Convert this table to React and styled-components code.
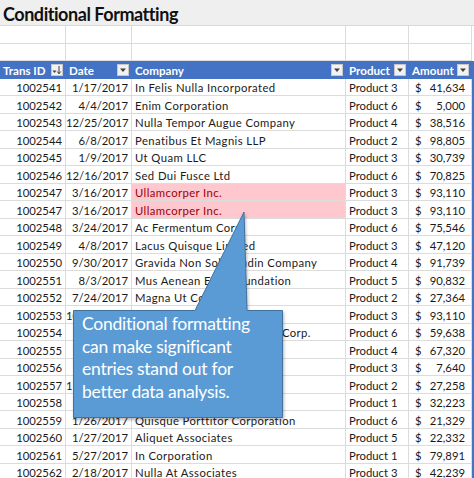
import styled, { createGlobalStyle } from "styled-components";

const GlobalStyle = createGlobalStyle`
  body {
    margin: 0;
    background: #ffffff;
  }
`;

// cells that sit wholly under the callout are left blank, as nothing of them shows
const rows = [
  ["1002541", "1/17/2017", "In Felis Nulla Incorporated", "Product 3", "41,634"],
  ["1002542", "4/4/2017", "Enim Corporation", "Product 6", "5,000"],
  ["1002543", "12/25/2017", "Nulla Tempor Augue Company", "Product 4", "38,516"],
  ["1002544", "6/8/2017", "Penatibus Et Magnis LLP", "Product 2", "98,805"],
  ["1002545", "1/9/2017", "Ut Quam LLC", "Product 3", "30,739"],
  ["1002546", "12/16/2017", "Sed Dui Fusce Ltd", "Product 6", "70,825"],
  ["1002547", "3/16/2017", "Ullamcorper Inc.", "Product 3", "93,110", true],
  ["1002547", "3/16/2017", "Ullamcorper Inc.", "Product 3", "93,110", true],
  ["1002548", "3/24/2017", "Ac Fermentum Corp.", "Product 6", "75,546"],
  ["1002549", "4/8/2017", "Lacus Quisque Limited", "Product 3", "47,120"],
  ["1002550", "9/30/2017", "Gravida Non Sollicitudin Company", "Product 4", "91,739"],
  ["1002551", "8/3/2017", "Mus Aenean Eget Foundation", "Product 5", "90,832"],
  ["1002552", "7/24/2017", "Magna Ut Corp.", "Product 2", "27,364"],
  ["1002553", "10/23/2017", "", "Product 3", "93,110"],
  ["1002554", "", "Vestibulum Ante Primis Est Corp.", "Product 6", "59,638"],
  ["1002555", "", "", "Product 4", "67,320"],
  ["1002556", "", "", "Product 3", "7,640"],
  ["1002557", "11/19/2017", "", "Product 2", "27,258"],
  ["1002558", "", "", "Product 1", "32,223"],
  ["1002559", "1/26/2017", "Quisque Porttitor Corporation", "Product 6", "21,329"],
  ["1002560", "1/27/2017", "Aliquet Associates", "Product 5", "22,332"],
  ["1002561", "5/27/2017", "In Corporation", "Product 1", "79,891"],
  ["1002562", "2/18/2017", "Nulla At Associates", "Product 3", "42,239"],
];

const Sheet = styled.div`
  position: relative;
  width: 474px;
  height: 478px;
  overflow: hidden;
  background: #ffffff;
  font-family: Lato, "Open Sans", sans-serif;
  color: #1a1a1a;
`;

const TitleBar = styled.div`
  height: 26px;
  box-sizing: border-box;
  background: #efefef;
  border-bottom: 1px solid #d9d9d9;
  padding: 3px 0 0 3px;
  font-size: 18px;
  font-weight: 700;
  letter-spacing: -0.45px;
  line-height: 22px;
  color: #111;
`;

const Row = styled.div`
  display: grid;
  grid-template-columns: 66px 66px 214px 63px 63px 2px;
  height: 17.5px;
  background: ${(p) => (p.$header ? "#4472c4" : "#ffffff")};
`;

const Cell = styled.div`
  box-sizing: border-box;
  height: 17.5px;
  overflow: hidden;
  white-space: nowrap;
  border-right: 1px solid #dcdcdc;
  border-bottom: 1px solid #dcdcdc;
  padding: 1.5px ${(p) => p.$pr || 0}px 0 ${(p) => p.$pl || 0}px;
  text-align: ${(p) => p.$align || "left"};
  font-size: 11.3px;
  line-height: 16px;
  letter-spacing: ${(p) => (p.$spread ? "0.4px" : "0")};
  background: ${(p) => (p.$pink ? "#ffc7ce" : "transparent")};
  color: ${(p) => (p.$pink ? "#9c0006" : "inherit")};
`;

const Money = styled(Cell)`
  display: flex;
  justify-content: space-between;
`;

const Edge = styled.div`
  background: ${(p) => (p.$blue ? "#4472c4" : "#ffffff")};
`;

const HeadCell = styled.div`
  box-sizing: border-box;
  height: 17.5px;
  display: flex;
  align-items: center;
  justify-content: space-between;
  padding: 1px 3px 0 3px;
  color: #ffffff;
  font-size: 11.6px;
  font-weight: 700;
  white-space: nowrap;
`;

const FilterButton = styled.span`
  width: 12px;
  height: 12px;
  box-sizing: border-box;
  background: #f2f2f2;
  border: 1px solid #c8c8c8;
  display: flex;
  align-items: center;
  justify-content: center;
`;

const Callout = styled.div`
  position: absolute;
  left: 72px;
  top: 210px;
  width: 216px;
  height: 212px;
`;

const CalloutShape = styled.svg`
  position: absolute;
  left: 0;
  top: 0;
  filter: drop-shadow(1px 2px 1.5px rgba(0, 0, 0, 0.28));
`;

const CalloutText = styled.div`
  position: absolute;
  left: 10px;
  top: 103px;
  color: #ffffff;
  font-size: 17.5px;
  line-height: 22.5px;
  letter-spacing: -0.25px;
  white-space: nowrap;
`;

const Triangle = () => (
  <svg width="8" height="6" viewBox="0 0 8 6">
    <path d="M1 1.5h6L4 5z" fill="#404040" />
  </svg>
);

const SortIcon = () => (
  <svg width="10" height="10" viewBox="0 0 10 10">
    <path d="M0.5 5.5h4L2.5 8z" fill="#404040" />
    <path d="M7 1v7.5" stroke="#404040" strokeWidth="1" />
    <path d="M5.3 6.5L7 8.8 8.7 6.5" stroke="#404040" strokeWidth="1" fill="none" />
  </svg>
);

const BlankRow = () => (
  <Row>
    <Cell />
    <Cell />
    <Cell />
    <Cell />
    <Cell />
    <Edge />
  </Row>
);

const headers = ["Date", "Company", "Product", "Amount"];

export default function App() {
  return (
    <>
      <GlobalStyle />
      <Sheet>
        <TitleBar>Conditional Formatting</TitleBar>
        <BlankRow />
        <BlankRow />
        <Row $header>
          <HeadCell>
            Trans ID
            <FilterButton>
              <SortIcon />
            </FilterButton>
          </HeadCell>
          {headers.map((h) => (
            <HeadCell key={h}>
              {h}
              <FilterButton>
                <Triangle />
              </FilterButton>
            </HeadCell>
          ))}
          <Edge $blue />
        </Row>
        {rows.map(([id, date, company, product, amount, hot], i) => (
          <Row key={i}>
            <Cell $align="right" $pr={3}>
              {id}
            </Cell>
            <Cell $align="right" $pr={3}>
              {date}
            </Cell>
            <Cell $pl={3} $spread $pink={hot}>
              {company}
            </Cell>
            <Cell $pl={3}>{product}</Cell>
            <Money $pl={6} $pr={6}>
              <span>$</span>
              <span>{amount}</span>
            </Money>
            <Edge $blue />
          </Row>
        ))}
        <Callout>
          <CalloutShape width="216" height="212" viewBox="0 0 216 212">
            <path
              d="M1.5 100.5H123L172 2l3 98.5h35.5v107H1.5z"
              fill="#5b9bd5"
              stroke="#41719c"
              strokeWidth="1"
            />
          </CalloutShape>
          <CalloutText>
            Conditional formatting
            <br />
            can make significant
            <br />
            entries stand out for
            <br />
            better data analysis.
          </CalloutText>
        </Callout>
      </Sheet>
    </>
  );
}
